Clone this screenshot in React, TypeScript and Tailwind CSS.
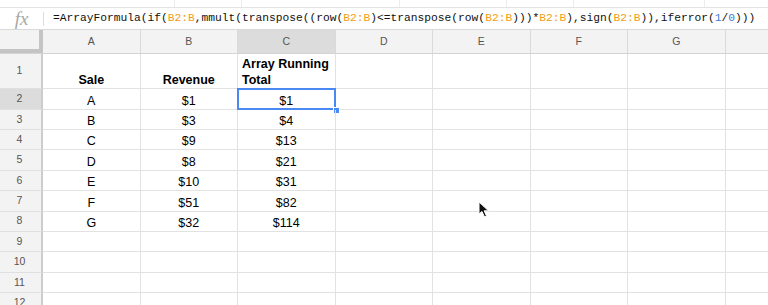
import React from 'react'

const cols = ['A', 'B', 'C', 'D', 'E', 'F', 'G']

const data: [string, string, string][] = [
  ['A', '$1', '$1'],
  ['B', '$3', '$4'],
  ['C', '$9', '$13'],
  ['D', '$8', '$21'],
  ['E', '$10', '$31'],
  ['F', '$51', '$82'],
  ['G', '$32', '$114'],
]

const Ref = ({ children }: { children: React.ReactNode }) => <span className="text-[#f39c12]">{children}</span>

const FormulaBar = () => (
  <div className="flex h-[22px] items-center border-b border-[#d9d9d9] bg-white">
    <div className="flex w-[43px] items-center justify-center">
      <span className="font-['Liberation_Serif',serif] text-[19px] italic leading-none text-[#a8a8a8]">fx</span>
    </div>
    <div className="h-[14px] border-l border-[#dcdcdc]" />
    <div className="ml-[9px] whitespace-nowrap font-['Liberation_Mono',monospace] text-[11.25px] text-[#111]">
      =ArrayFormula(if(<Ref>B2:B</Ref>,mmult(transpose((row(<Ref>B2:B</Ref>)&lt;=transpose(row(<Ref>B2:B</Ref>)))*<Ref>B2:B</Ref>),sign(<Ref>B2:B</Ref>)),iferror(<span className="text-[#3c78d8]">1</span>/<span className="text-[#3c78d8]">0</span>)))
    </div>
  </div>
)

const Toolbar = () => (
  <div className="flex h-[8px] border-b border-[#e3e3e3] bg-white">
    <div className="w-[175px] border-r border-[#ececec]" />
    <div className="w-[67px] border-r border-[#ececec]" />
    <div className="w-[158px] border-r border-[#ececec]" />
    <div className="w-[107px] border-r border-[#ececec]" />
    <div className="w-[67px] border-r border-[#ececec]" />
    <div className="w-[131px] border-r border-[#ececec]" />
  </div>
)

const RowHead = ({ n, active, h }: { n: number; active?: boolean; h: string }) => (
  <div
    className={`flex w-[43px] shrink-0 items-center justify-center border-b border-r-2 border-r-[#cdcdcd] border-b-[#e0e0e0] pr-[2px] text-[10.5px] text-[#555] ${h} ${active ? 'bg-[#dcdcdc]' : 'bg-[#f3f3f3]'}`}
  >
    {n}
  </div>
)

const Cell = ({ children, h, bold, left }: { children?: React.ReactNode; h: string; bold?: boolean; left?: boolean }) => (
  <div
    className={`flex w-[97.5px] shrink-0 items-end border-b border-r border-[#e2e2e2] text-[12.5px] leading-[16px] text-black ${h} ${bold ? 'font-bold' : ''} ${left ? 'justify-start pl-[4px]' : 'justify-center'}`}
  >
    {children}
  </div>
)

export default function App() {
  const empty = [9, 10, 11, 12]
  return (
    <div className="relative h-[305px] w-[768px] overflow-hidden bg-white font-['Liberation_Sans',Arial,sans-serif]">
      <Toolbar />
      <FormulaBar />

      <div className="flex h-[24px] border-b border-[#d4d4d4] bg-[#f3f3f3]">
        <div className="w-[43px] shrink-0 border-b-[4px] border-r-[4px] border-[#c4c4c4]" />
        {cols.map((c) => (
          <div
            key={c}
            className={`flex w-[97.5px] shrink-0 items-center justify-center border-r border-[#dadada] text-[10.5px] text-[#555] ${c === 'C' ? 'bg-[#dcdcdc]' : ''}`}
          >
            {c}
          </div>
        ))}
        <div className="flex-1" />
      </div>

      <div className="flex">
        <RowHead n={1} h="h-[35.3px]" />
        <Cell h="h-[35.3px]" bold>Sale</Cell>
        <Cell h="h-[35.3px]" bold>Revenue</Cell>
        <Cell h="h-[35.3px]" bold left>
          <span className="w-[90px]">Array Running Total</span>
        </Cell>
        <Cell h="h-[35.3px]" />
        <Cell h="h-[35.3px]" />
        <Cell h="h-[35.3px]" />
        <Cell h="h-[35.3px]" />
        <div className="h-[35.3px] flex-1 border-b border-[#e2e2e2]" />
      </div>

      {data.map((r, i) => (
        <div key={i} className="flex">
          <RowHead n={i + 2} active={i === 0} h="h-[20.4px]" />
          <Cell h="h-[20.4px]">{r[0]}</Cell>
          <Cell h="h-[20.4px]">{r[1]}</Cell>
          <div className="relative">
            <Cell h="h-[20.4px]">{r[2]}</Cell>
            {i === 0 && (
              <>
                <div className="absolute -left-[1px] -top-[1px] h-[21.4px] w-[98.5px] border-2 border-[#4a89f3]" />
                <div className="absolute -bottom-[4px] -right-[4px] h-[7px] w-[7px] border border-white bg-[#4a89f3]" />
              </>
            )}
          </div>
          <Cell h="h-[20.4px]" />
          <Cell h="h-[20.4px]" />
          <Cell h="h-[20.4px]" />
          <Cell h="h-[20.4px]" />
          <div className="h-[20.4px] flex-1 border-b border-[#e2e2e2]" />
        </div>
      ))}

      {empty.map((n) => (
        <div key={n} className="flex">
          <RowHead n={n} h="h-[20.4px]" />
          {cols.map((c) => (
            <Cell key={c} h="h-[20.4px]" />
          ))}
          <div className="h-[20.4px] flex-1 border-b border-[#e2e2e2]" />
        </div>
      ))}

      <svg className="absolute left-[478px] top-[201px]" width="12" height="17" viewBox="0 0 12 17">
        <path d="M1 1 L1 13 L4 10.5 L6.5 16 L8.5 15 L6.2 9.8 L10.5 9.8 Z" fill="#111" stroke="#fff" strokeWidth="1" />
      </svg>
    </div>
  )
}
